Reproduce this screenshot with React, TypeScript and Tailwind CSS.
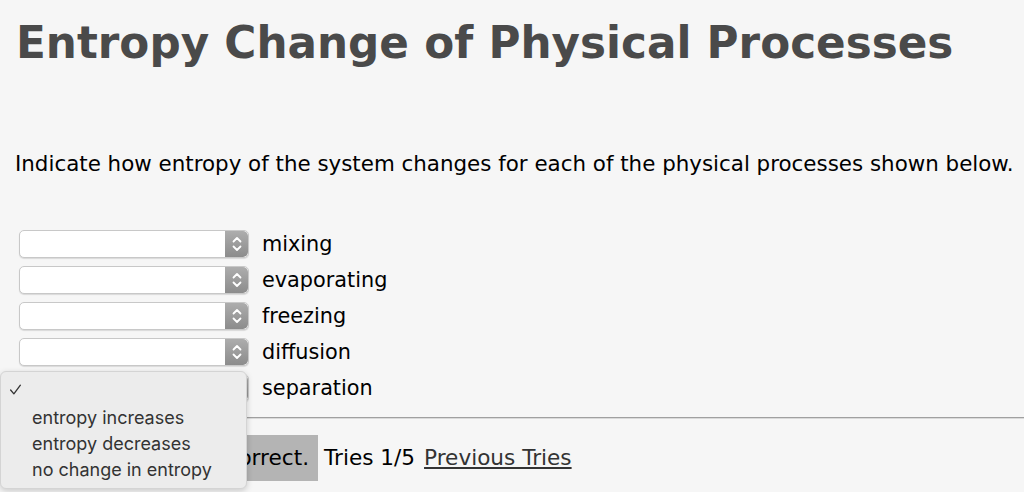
import React from "react";

function Stepper() {
  return (
    <div className="w-[23px] h-full rounded-r-[5px] bg-gradient-to-b from-[#adadad] to-[#8c8c8c] flex items-center justify-center">
      <svg width="12" height="20" viewBox="0 0 12 20" fill="none" stroke="white" strokeWidth="1.8" strokeLinecap="round" strokeLinejoin="round">
        <path d="M2.5 7.5 L6 4 L9.5 7.5" />
        <path d="M2.5 12.5 L6 16 L9.5 12.5" />
      </svg>
    </div>
  );
}

function Select() {
  return (
    <div className="w-[230px] h-[28px] flex rounded-[5px] border border-[#c8c8c8] bg-white shadow-[0_1px_1px_rgba(0,0,0,0.12)] overflow-hidden">
      <div className="flex-1" />
      <Stepper />
    </div>
  );
}

const items = ["mixing", "evaporating", "freezing", "diffusion", "separation"];

export default function App() {
  return (
    <div className="relative w-full h-[492px] overflow-hidden bg-[#f6f6f6] text-black" style={{ fontFamily: '"DejaVu Sans", Verdana, sans-serif' }}>
      <h1 className="pl-[16px] pt-[15px] text-[43.7px] leading-[56px] font-bold text-[#4a4a4a]">
        Entropy Change of Physical Processes
      </h1>
      <p className="pl-[15px] mt-[80px] text-[21.4px] leading-[26px]">
        Indicate how entropy of the system changes for each of the physical processes shown below.
      </p>
      <div className="mt-[53px] pl-[19px] flex flex-col gap-[8px]">
        {items.map((t) => (
          <div key={t} className="flex items-center gap-[13px] h-[28px]">
            <Select />
            <span className="text-[20.8px] leading-[28px]">{t}</span>
          </div>
        ))}
      </div>
      <div className="mt-[15px] border-t border-t-[#a0a0a0] border-b border-b-[#dadada]" />
      <div className="mt-[16px] flex items-center h-[46px] text-[21.6px]">
        <span className="bg-[#b4b4b4] h-full w-[300px] flex items-center justify-end pr-[9px] ml-[18px]">Incorrect.</span>
        <span className="ml-[6px]">Tries 1/5</span>
        <span className="ml-[9px] underline text-[#333]">Previous Tries</span>
      </div>

      <div className="absolute left-0 top-[371px] w-[247px] h-[118px] rounded-[6px] bg-[#ececec] border border-[#d4d4d4] shadow-[0_2px_6px_rgba(0,0,0,0.18)]" style={{ fontFamily: 'Inter, "Liberation Sans", Arial, sans-serif' }}>
        <div className="absolute left-[8px] top-[11px]">
          <svg width="13" height="13" viewBox="0 0 12 12" fill="none" stroke="#333" strokeWidth="1.2" strokeLinecap="round" strokeLinejoin="round">
            <path d="M1.5 6.5 L4.5 10 L10.5 2" />
          </svg>
        </div>
        <div className="pt-[33px] pl-[31px] flex flex-col text-[18px] leading-[26px] text-[#333]">
          <span>entropy increases</span>
          <span>entropy decreases</span>
          <span>no change in entropy</span>
        </div>
      </div>
    </div>
  );
}
